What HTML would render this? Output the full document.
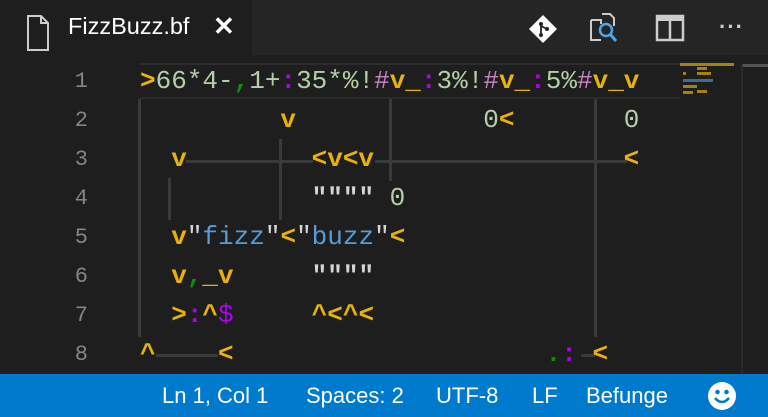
<!DOCTYPE html>
<html><head><meta charset="utf-8"><style>
*{margin:0;padding:0;box-sizing:border-box}
body{width:768px;height:417px;background:#1e1e1e;overflow:hidden;position:relative;font-family:"Liberation Sans",sans-serif}
#tabs{position:absolute;left:0;top:0;width:768px;height:55px;background:#252526}
#tab{position:absolute;left:0;top:0;width:252px;height:55px;background:#1e1e1e}
#tab .name{position:absolute;left:68px;top:13px;color:#fff;font-size:23.5px}
.ln{position:absolute;left:60px;width:28px;text-align:right;color:#858585;font-family:"Liberation Mono",monospace;font-size:22px}
.code{position:absolute;left:140px;font-family:"Liberation Mono",monospace;font-size:26px;white-space:pre;color:#e8b20c;line-height:39px;font-weight:bold}
.y{color:#f0b400}.n{color:#b5cea8;font-weight:normal}.g{color:#148a14}.m{color:#b000f0}.p{color:#c586c0;font-weight:normal}.s{color:#569cd6;font-weight:normal}.w{color:#d4d4d4;font-weight:normal}.q{color:#d4d4d4}
.vl{position:absolute;width:3px;background:#3a3a3a}
.hl{position:absolute;height:3px;background:#3a3a3a}
#cur{position:absolute;left:140px;top:63px;width:540px;height:36px;background:#1e1e1e;border-top:2px solid #2c2c2c;border-bottom:2px solid #2c2c2c}
#status{position:absolute;left:0;top:374px;width:768px;height:43px;background:#007acc;color:#fff;font-size:22px}
#status span{position:absolute;top:9px}
</style></head><body>
<div id="tabs"></div>
<div id="tab">
<svg style="position:absolute;left:26px;top:14px" width="24" height="38" viewBox="0 0 24 38"><path d="M2 2h13l7 7v27H2z M15 2v7h7" fill="none" stroke="#ccc" stroke-width="2"/></svg>
<span class="name">FizzBuzz.bf</span></div>
<span style="position:absolute;left:213px;top:11px;color:#fff;font-size:26px;font-weight:bold">✕</span>
<svg style="position:absolute;left:528px;top:14px" width="30" height="30" viewBox="0 0 30 30"><path d="M15 1L29 15L15 29L1 15Z" fill="#fff"/><circle cx="13" cy="10" r="2" fill="#252526"/><circle cx="13" cy="21" r="2" fill="#252526"/><circle cx="19" cy="15" r="2" fill="#252526"/><path d="M13 10v11M13 12l6 3" stroke="#252526" stroke-width="1.8"/></svg>
<svg style="position:absolute;left:588px;top:12px" width="34" height="32" viewBox="0 0 34 32"><path d="M14 2h8l4 4v8 M3 8h10v4 M3 8v20h10" fill="none" stroke="#ccc" stroke-width="2"/><circle cx="18" cy="18" r="6" fill="none" stroke="#4ea6ea" stroke-width="2.5"/><path d="M22 22l6 7" stroke="#4ea6ea" stroke-width="3"/></svg>
<svg style="position:absolute;left:655px;top:14px" width="30" height="28" viewBox="0 0 30 28"><rect x="2" y="2" width="26" height="24" fill="none" stroke="#ccc" stroke-width="2.5"/><rect x="2" y="2" width="26" height="5" fill="#ccc"/><path d="M15 2v24" stroke="#ccc" stroke-width="2.5"/></svg>
<span style="position:absolute;left:719px;top:14px;color:#ccc;font-size:22px;letter-spacing:1px;font-weight:bold">···</span>

<div id="cur"></div>
<div class="vl" style="left:138px;top:99px;height:238px"></div>
<div class="vl" style="left:168px;top:178px;height:42px"></div>
<div class="vl" style="left:279px;top:139px;height:81px"></div>
<div class="vl" style="left:389px;top:99px;height:82px"></div>
<div class="vl" style="left:594px;top:99px;height:238px"></div>
<div class="hl" style="left:186px;top:160px;width:127px"></div>
<div class="hl" style="left:375px;top:160px;width:252px"></div>
<div class="hl" style="left:156px;top:354px;width:62px"></div>
<div class="hl" style="left:581px;top:354px;width:14px"></div>
<div style="position:absolute;left:743px;top:64px;width:25px;height:3px;background:#555"></div>
<div style="position:absolute;left:741px;top:64px;width:2px;height:310px;background:#2b2b2b"></div>
<svg style="position:absolute;left:680px;top:63px" width="60" height="40"><g fill="#c99a10" opacity=".8"><rect x="0" y="0" width="54" height="3"/><rect x="17" y="4" width="10" height="3"/><rect x="3" y="9" width="3" height="3"/><rect x="17" y="9" width="14" height="3"/><rect x="3" y="16" width="30" height="3" fill="#4a7fb0"/><rect x="3" y="22" width="14" height="3"/><rect x="3" y="28" width="10" height="3"/><rect x="17" y="27" width="10" height="3"/></g></svg>

<div class="ln" style="top:69px">1</div>
<div class="ln" style="top:108px">2</div>
<div class="ln" style="top:147px">3</div>
<div class="ln" style="top:186px">4</div>
<div class="ln" style="top:225px">5</div>
<div class="ln" style="top:264px">6</div>
<div class="ln" style="top:303px">7</div>
<div class="ln" style="top:342px">8</div>

<div class="code" style="top:62px"><span class="y">&gt;</span><span class="n">66*4-</span><span class="g">,</span><span class="n">1+</span><span class="m">:</span><span class="n">35*%!</span><span class="p">#</span>v_<span class="m">:</span><span class="n">3%!</span><span class="p">#</span>v_<span class="m">:</span><span class="n">5%</span><span class="p">#</span>v_v
         v            <span class="n">0</span>&lt;       <span class="n">0</span>
  v        &lt;v&lt;v                &lt;
           <span class="q">""""</span> <span class="n">0</span>
  v<span class="w">"</span><span class="s">fizz</span><span class="w">"</span>&lt;<span class="w">"</span><span class="s">buzz</span><span class="w">"</span>&lt;
  v<span class="g">,</span>_v     <span class="q">""""</span>
  &gt;<span class="m">:</span>^<span class="m" style="font-weight:normal">$</span>     ^&lt;^&lt;
^    &lt;                    <span class="g">.</span><span class="m">:</span> &lt;</div>

<div id="status">
<span style="left:162px">Ln 1, Col 1</span>
<span style="left:306px">Spaces: 2</span>
<span style="left:436px">UTF-8</span>
<span style="left:532px">LF</span>
<span style="left:586px">Befunge</span>
<svg style="position:absolute;left:707px;top:7px" width="30" height="30" viewBox="0 0 30 30"><circle cx="15" cy="15" r="14" fill="#fff"/><circle cx="10.5" cy="11" r="2.3" fill="#007acc"/><circle cx="19.5" cy="11" r="2.3" fill="#007acc"/><path d="M8 17q7 8 14 0" fill="none" stroke="#007acc" stroke-width="2.5"/></svg>
</div>
</body></html>
